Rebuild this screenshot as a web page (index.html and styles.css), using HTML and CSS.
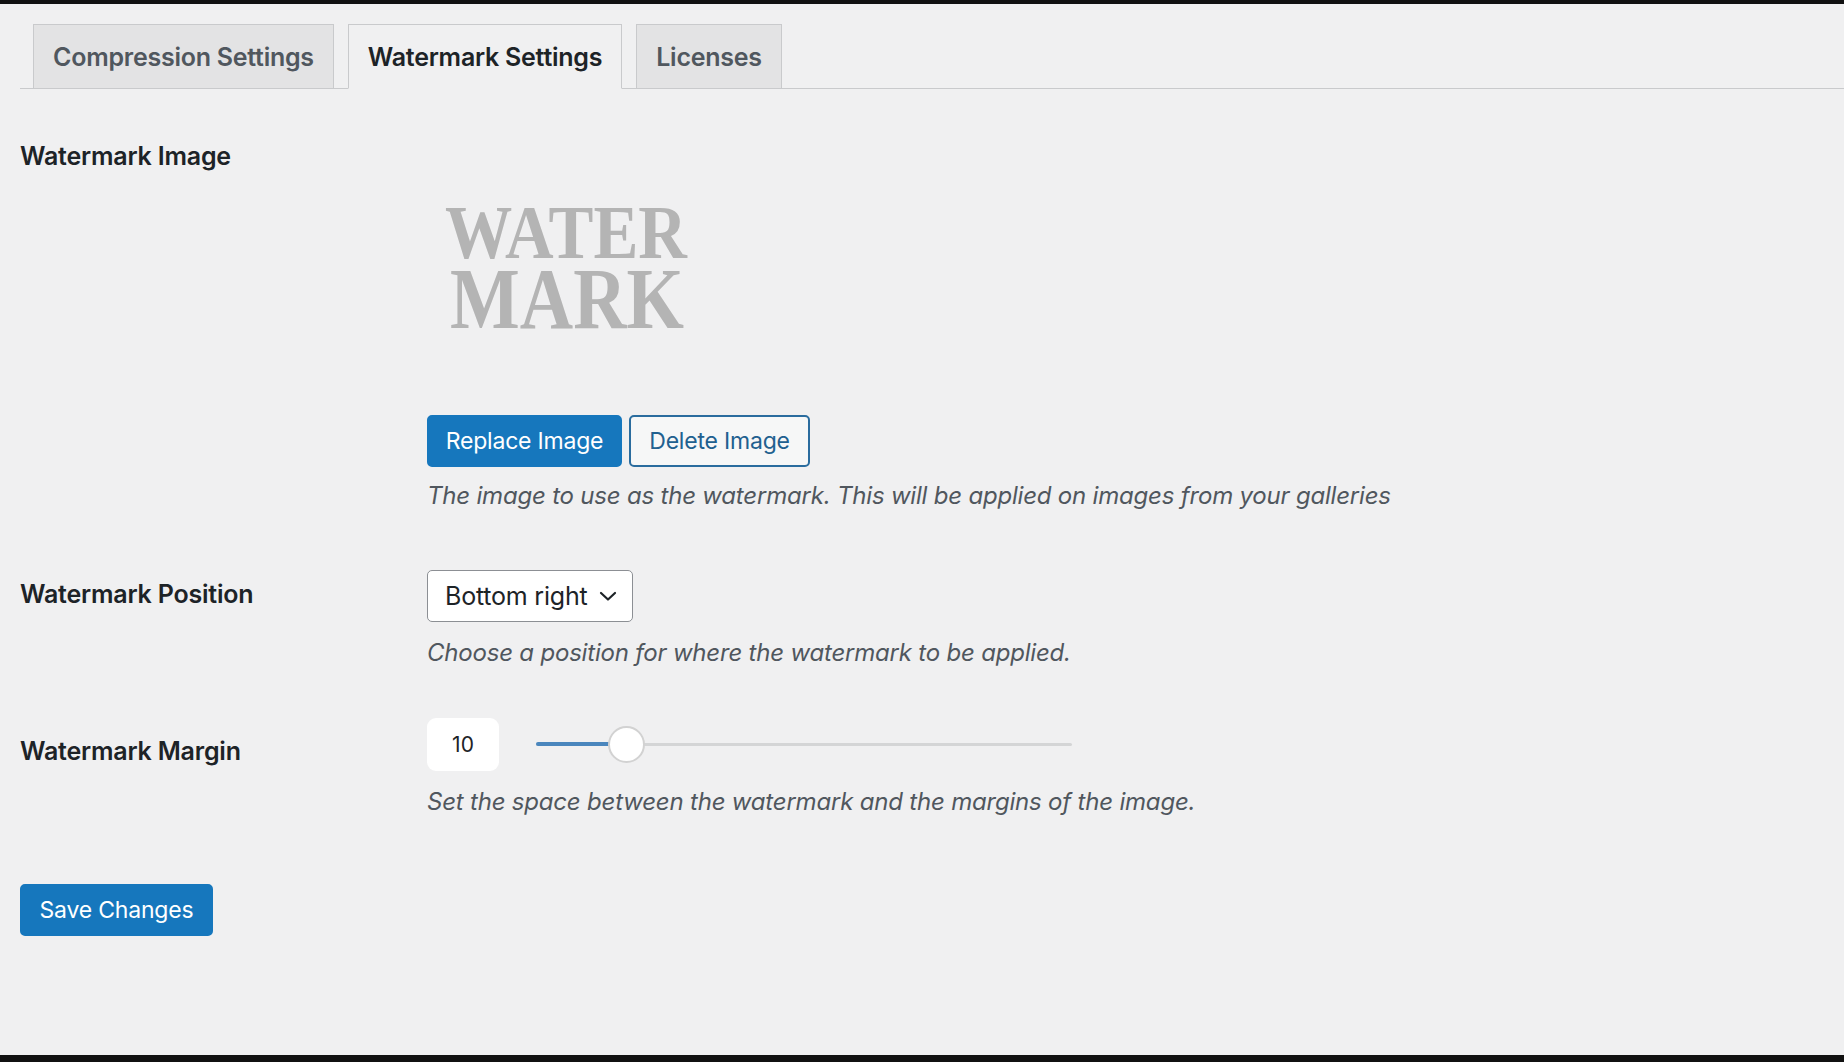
FILE: index.html
```html
<!DOCTYPE html>
<html lang="en">
<head>
<meta charset="utf-8">
<title>Watermark Settings</title>
<link rel="stylesheet" href="styles.css">
</head>
<body>
<div class="screen">
  <div class="topbar"></div>
  <main class="main">
    <nav class="tabs">
      <a class="tab">Compression Settings</a>
      <a class="tab tab-active">Watermark Settings</a>
      <a class="tab">Licenses</a>
    </nav>
    <form class="form">
      <div class="row row-image">
        <div class="label">Watermark Image</div>
        <div class="field">
          <svg class="wm-logo" width="320" height="160" viewBox="0 0 320 160">
            <text x="7" y="68" font-size="76" textLength="242" lengthAdjust="spacingAndGlyphs" class="wm-text">WATER</text>
            <text x="12" y="138" font-size="86" textLength="234" lengthAdjust="spacingAndGlyphs" class="wm-text">MARK</text>
          </svg>
          <div class="buttons">
            <button type="button" class="btn btn-primary">Replace Image</button>
            <button type="button" class="btn btn-secondary">Delete Image</button>
          </div>
          <p class="desc desc-1">The image to use as the watermark. This will be applied on images from your galleries</p>
        </div>
      </div>
      <div class="row row-position">
        <div class="label">Watermark Position</div>
        <div class="field">
          <div class="select">
            <span>Bottom right</span>
            <svg class="chev" width="20" height="12" viewBox="0 0 20 12"><path d="M3 3 L10 9.5 L17 3" fill="none" stroke="#1d2327" stroke-width="2.2" stroke-linecap="round" stroke-linejoin="round"/></svg>
          </div>
          <p class="desc desc-2">Choose a position for where the watermark to be applied.</p>
        </div>
      </div>
      <div class="row row-margin">
        <div class="label">Watermark Margin</div>
        <div class="field">
          <div class="range-row">
            <div class="number">10</div>
            <div class="slider">
              <div class="track"></div>
              <div class="track-fill"></div>
              <div class="thumb"></div>
            </div>
          </div>
          <p class="desc desc-3">Set the space between the watermark and the margins of the image.</p>
        </div>
      </div>
      <button type="button" class="btn btn-primary btn-save">Save Changes</button>
    </form>
  </main>
  <div class="bottombar"></div>
</div>
</body>
</html>
```
FILE: styles.css
```css
* { box-sizing: border-box; }
html, body { margin: 0; padding: 0; }
body {
  background: #f0f0f1;
  font-family: Inter, "Noto Sans", "Liberation Sans", sans-serif;
  color: #1d2327;
}
.screen {
  height: 1062px;
  display: flex;
  flex-direction: column;
  overflow: hidden;
}
.topbar { height: 4px; background: #111; flex: none; }
.bottombar { height: 7px; background: #111; flex: none; }
.main {
  flex: 1;
  padding-left: 20px;
}
.tabs {
  display: flex;
  gap: 14px;
  padding: 20px 0 0 13px;
  border-bottom: 1px solid #c9cacc;
}
.tab {
  display: block;
  height: 65px;
  line-height: 64px;
  padding: 0 19px;
  margin-bottom: -1px;
  border: 1px solid #c9cacc;
  background: #e3e3e4;
  color: #50575e;
  font-size: 25px;
  font-weight: 600;
  letter-spacing: -0.25px;
  white-space: nowrap;
}
.tab-active {
  background: #f0f0f1;
  border-bottom-color: #f0f0f1;
  color: #1d2327;
}
.form { margin-top: 50px; }
.row { display: flex; }
.label {
  width: 407px;
  flex: none;
  font-size: 25px;
  line-height: 35px;
  font-weight: 600;
  letter-spacing: -0.2px;
  color: #1d2327;
}
.field { flex: 1; }
.wm-logo { display: block; margin: 51px 0 0 11px; }
.wm-text {
  font-family: "Liberation Serif", "DejaVu Serif", serif;
  font-weight: 700;
  fill: #b4b4b4;
}
.buttons { display: flex; gap: 7px; margin-top: 65px; }
.btn {
  font-family: Inter, "Noto Sans", "Liberation Sans", sans-serif;
  font-size: 23px;
  height: 52px;
  padding: 0;
  border-radius: 5px;
  cursor: pointer;
  letter-spacing: -0.2px;
}
.btn-primary {
  background: #1677bd;
  border: 2px solid #1677bd;
  color: #fff;
}
.buttons .btn-primary { width: 195px; }
.btn-secondary {
  width: 181px;
  background: #f6f7f7;
  border: 2px solid #2a6c9e;
  color: #21608f;
}
.desc {
  margin: 0;
  font-size: 24px;
  line-height: 35px;
  font-style: italic;
  color: #50575e;
  letter-spacing: -0.2px;
}
.desc-1 { margin-top: 11px; }
.row-position { margin-top: 57px; }
.row-position .label { padding-top: 7px; }
.select {
  width: 206px;
  height: 52px;
  background: #fff;
  border: 1px solid #8c8f94;
  border-radius: 5px;
  display: flex;
  align-items: center;
  justify-content: space-between;
  padding: 0 14px 0 17px;
  font-size: 25px;
  color: #1d2327;
  letter-spacing: -0.2px;
}
.chev { flex: none; }
.desc-2 { margin-top: 13px; }
.row-margin { margin-top: 48px; }
.row-margin .label { padding-top: 16px; }
.range-row { display: flex; align-items: center; height: 53px; }
.number {
  width: 72px;
  height: 53px;
  background: #fff;
  border-radius: 9px;
  display: flex;
  align-items: center;
  justify-content: center;
  font-size: 21px;
  color: #1d2327;
}
.slider {
  position: relative;
  width: 536px;
  height: 40px;
  margin-left: 37px;
}
.track {
  position: absolute;
  left: 0; right: 0; top: 18px;
  height: 3px;
  background: #d4d5d6;
  border-radius: 2px;
}
.track-fill {
  position: absolute;
  left: 0; top: 17px;
  width: 80px;
  height: 4px;
  background: #4a86bd;
  border-radius: 2px;
}
.thumb {
  position: absolute;
  left: 72px; top: 1px;
  width: 37px; height: 37px;
  border-radius: 50%;
  background: #fff;
  border: 2px solid #d2d2d2;
}
.desc-3 { margin-top: 13px; }
.btn-save {
  display: block;
  width: 193px;
  margin-top: 65px;
}
```
